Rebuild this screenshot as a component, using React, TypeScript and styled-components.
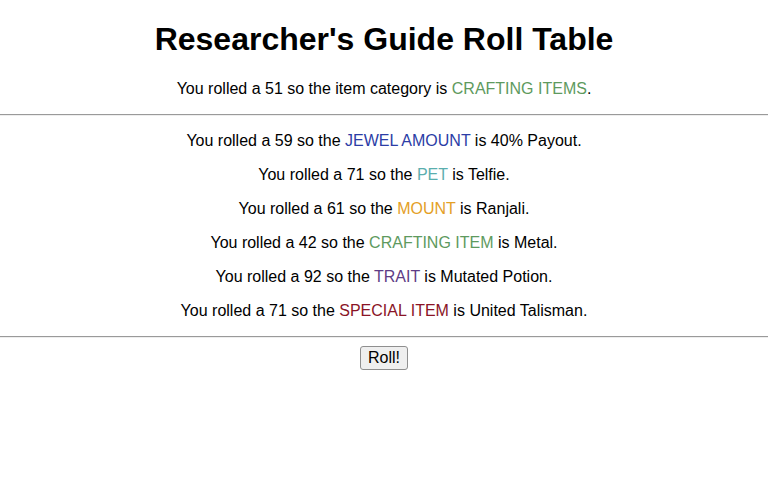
import React from "react";
import styled, { createGlobalStyle } from "styled-components";

const Global = createGlobalStyle`
  html, body { margin: 0; padding: 0; background: #fff; }
  body { font-family: "Liberation Sans", Arial, sans-serif; color: #000; }
`;

const Page = styled.main`
  text-align: center;
`;

const Title = styled.h1`
  font-size: 32px;
  font-weight: bold;
  margin: 21.44px 0;
`;

const Line = styled.p`
  font-size: 16px;
  margin: 16px 0;
  line-height: 18px;
`;

const Tag = styled.span<{ $color: string }>`
  color: ${(p) => p.$color};
`;

const Rule = styled.hr`
  margin: 8px 0;
  border: none;
  border-top: 1px solid #9a9a9a;
  border-bottom: 1px solid #eeeeee;
`;

const RollButton = styled.button`
  font-family: "Liberation Sans", Arial, sans-serif;
  font-size: 16px;
  padding: 1px 7px;
  height: 24px;
  border: 1px solid #8f8f8f;
  border-radius: 3px;
  background: #efefef;
  color: #000;
`;

const rows: { n: number; label: string; color: string; value: string }[] = [
  { n: 59, label: "JEWEL AMOUNT", color: "#2c3da6", value: "40% Payout" },
  { n: 71, label: "PET", color: "#5aaeae", value: "Telfie" },
  { n: 61, label: "MOUNT", color: "#e4a026", value: "Ranjali" },
  { n: 42, label: "CRAFTING ITEM", color: "#5e9a5e", value: "Metal" },
  { n: 92, label: "TRAIT", color: "#5e3c86", value: "Mutated Potion" },
  { n: 71, label: "SPECIAL ITEM", color: "#8a1426", value: "United Talisman" },
];

export default function App() {
  return (
    <Page>
      <Global />
      <Title>Researcher's Guide Roll Table</Title>
      <Line>
        You rolled a 51 so the item category is <Tag $color="#5e9a5e">CRAFTING ITEMS</Tag>.
      </Line>
      <Rule />
      {rows.map((r, i) => (
        <Line key={i}>
          You rolled a {r.n} so the <Tag $color={r.color}>{r.label}</Tag> is {r.value}.
        </Line>
      ))}
      <Rule />
      <RollButton>Roll!</RollButton>
    </Page>
  );
}
